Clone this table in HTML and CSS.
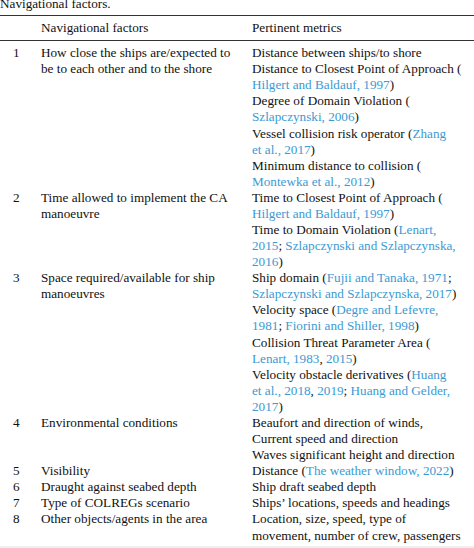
FILE: index.html
```html
<!DOCTYPE html>
<html lang="en">
<head>
<meta charset="utf-8">
<title>Navigational factors</title>
<link rel="stylesheet" href="styles.css">
</head>
<body>
<div class="page">
  <div class="caption">Navigational factors.</div>
  <div class="table">
    <div class="row head">
      <div class="num"></div>
      <div class="factor">Navigational factors</div>
      <div class="metrics">Pertinent metrics</div>
    </div>
    <div class="row first">
      <div class="num">1</div>
      <div class="factor">How close the ships are/expected to<br>be to each other and to the shore</div>
      <div class="metrics">
        <p>Distance between ships/to shore</p>
        <p>Distance to Closest Point of Approach (<br><a>Hilgert and Baldauf, 1997</a>)</p>
        <p>Degree of Domain Violation (<br><a>Szlapczynski, 2006</a>)</p>
        <p>Vessel collision risk operator (<a>Zhang<br>et al., 2017</a>)</p>
        <p>Minimum distance to collision (<br><a>Montewka et al., 2012</a>)</p>
      </div>
    </div>
    <div class="row">
      <div class="num">2</div>
      <div class="factor">Time allowed to implement the CA<br>manoeuvre</div>
      <div class="metrics">
        <p>Time to Closest Point of Approach (<br><a>Hilgert and Baldauf, 1997</a>)</p>
        <p>Time to Domain Violation (<a>Lenart,<br>2015</a>; <a>Szlapczynski and Szlapczynska,<br>2016</a>)</p>
      </div>
    </div>
    <div class="row">
      <div class="num">3</div>
      <div class="factor">Space required/available for ship<br>manoeuvres</div>
      <div class="metrics">
        <p>Ship domain (<a>Fujii and Tanaka, 1971</a>;<br><a>Szlapczynski and Szlapczynska, 2017</a>)</p>
        <p>Velocity space (<a>Degre and Lefevre,<br>1981</a>; <a>Fiorini and Shiller, 1998</a>)</p>
        <p>Collision Threat Parameter Area (<br><a>Lenart, 1983</a>, <a>2015</a>)</p>
        <p>Velocity obstacle derivatives (<a>Huang<br>et al., 2018</a>, <a>2019</a>; <a>Huang and Gelder,<br>2017</a>)</p>
      </div>
    </div>
    <div class="row">
      <div class="num">4</div>
      <div class="factor">Environmental conditions</div>
      <div class="metrics">
        <p>Beaufort and direction of winds,</p>
        <p>Current speed and direction</p>
        <p>Waves significant height and direction</p>
      </div>
    </div>
    <div class="row">
      <div class="num">5</div>
      <div class="factor">Visibility</div>
      <div class="metrics"><p>Distance (<a>The weather window, 2022</a>)</p></div>
    </div>
    <div class="row">
      <div class="num">6</div>
      <div class="factor">Draught against seabed depth</div>
      <div class="metrics"><p>Ship draft seabed depth</p></div>
    </div>
    <div class="row">
      <div class="num">7</div>
      <div class="factor">Type of COLREGs scenario</div>
      <div class="metrics"><p>Ships’ locations, speeds and headings</p></div>
    </div>
    <div class="row">
      <div class="num">8</div>
      <div class="factor">Other objects/agents in the area</div>
      <div class="metrics"><p>Location, size, speed, type of<br>movement, number of crew, passengers</p></div>
    </div>
  </div>
  <div class="footband"></div>
</div>
</body>
</html>
```

FILE: styles.css
```css
html, body {
  margin: 0;
  padding: 0;
  background: #ffffff;
}
body {
  width: 474px;
  height: 548px;
  overflow: hidden;
  font-family: "Liberation Serif", "Times New Roman", serif;
  font-size: 13.2px;
  line-height: 16.08px;
  color: #111111;
}
.page {
  display: flex;
  flex-direction: column;
}
.caption {
  margin-top: -4px;
  margin-bottom: 3px;
  white-space: nowrap;
}
.table {
  border-top: 1.5px solid #333333;
}
.row {
  display: grid;
  grid-template-columns: 41px 211px 1fr;
  white-space: nowrap;
}
.row.head {
  padding: 4px 0 4px;
  border-bottom: 1.5px solid #333333;
}
.row.first {
  padding-top: 4px;
}
.num {
  padding-left: 13px;
}
.metrics p {
  margin: 0;
}
.metrics a {
  color: #3b9ad3;
  text-decoration: none;
}
.footband {
  margin-top: 2px;
  height: 6px;
  background: #efefef;
}
```
